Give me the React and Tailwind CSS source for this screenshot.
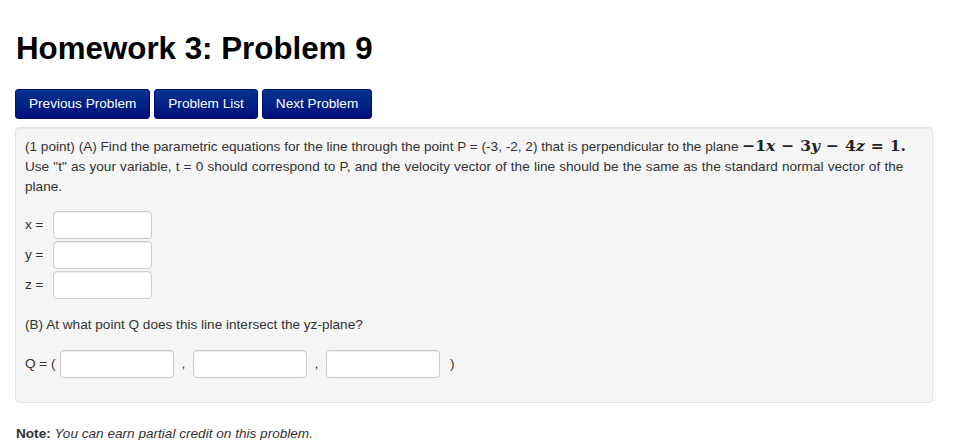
import React from 'react';

function Field({ className = '' }) {
  return (
    <input
      type="text"
      className={`h-[28px] rounded-[4px] border border-[#cccccc] bg-white px-1 shadow-[inset_0_1px_1px_rgba(0,0,0,0.075)] outline-none ${className}`}
    />
  );
}

export default function App() {
  return (
    <div className="min-h-screen bg-white font-['Liberation_Sans',Arial,sans-serif] text-[13.6px] text-[#333333]">
      <div className="px-[15px]">
        {/* title */}
        <h1 className="pt-[31px] pl-px text-[31.3px] leading-[36px] font-bold text-black">Homework 3: Problem 9</h1>

        {/* nav buttons */}
        <div className="mt-[22px] flex gap-[4px]">
          {['Previous Problem', 'Problem List', 'Next Problem'].map((label) => (
            <button
              key={label}
              className="h-[30px] rounded-[3px] border border-[#001070] bg-gradient-to-b from-[#07338f] to-[#000b7c] px-[13px] text-[13.6px] text-white"
            >
              {label}
            </button>
          ))}
        </div>

        {/* problem body */}
        <div className="mt-[8px] w-[918px] rounded-[4px] border border-[#e3e3e3] bg-[#f5f5f5] px-[9px] pt-[9px] pb-[24px] shadow-[inset_0_1px_1px_rgba(0,0,0,0.05)]">
          <p className="leading-[20px]">
            (1 point) (A) Find the parametric equations for the line through the point P = (-3, -2, 2) that is perpendicular to the plane{' '}
            <span className="font-['DejaVu_Serif','Liberation_Serif',serif] text-[15.5px] font-bold leading-[18px] text-[#222]">
              −1<i>x</i>
              <span className="mx-[6px]">−</span>3<i>y</i>
              <span className="mx-[6px]">−</span>4<i>z</i>
              <span className="mx-[6px]">=</span>1.
            </span>
            <br />
            <span className="[word-spacing:0.4px]">
              Use "t" as your variable, t = 0 should correspond to P, and the velocity vector of the line should be the same as the standard normal vector of the plane.
            </span>
          </p>

          <div className="mt-[14px] flex flex-col gap-[2px]">
            {['x', 'y', 'z'].map((v) => (
              <div key={v} className="flex items-center">
                <span className="w-[28px]">{v} =</span>
                <Field className="w-[99px]" />
              </div>
            ))}
          </div>

          <p className="mt-[16px] leading-[20px]">(B) At what point Q does this line intersect the yz-plane?</p>

          <div className="mt-[15px] flex items-center">
            <span className="w-[35px]">Q = (</span>
            <Field className="w-[114px]" />
            <span className="w-[19px] text-center">,</span>
            <Field className="w-[114px]" />
            <span className="w-[19px] text-center">,</span>
            <Field className="w-[114px]" />
            <span className="ml-[10px]">)</span>
          </div>
        </div>

        <p className="mt-[21px] pl-px">
          <b>Note:</b> <i>You can earn partial credit on this problem.</i>
        </p>
      </div>
    </div>
  );
}
